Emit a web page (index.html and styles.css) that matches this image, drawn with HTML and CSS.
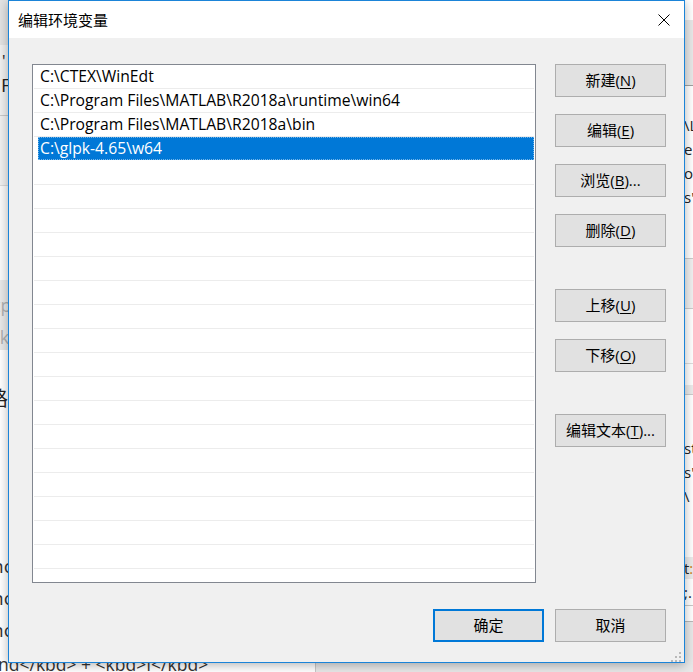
FILE: index.html
```html
<!DOCTYPE html>
<html lang="zh-CN">
<head>
<meta charset="utf-8">
<title>编辑环境变量</title>
<link rel="stylesheet" href="styles.css">
</head>
<body>
<div class="desk">
  <div class="pane-left">
    <div class="lb-top"></div>
    <div class="lb-head">
      <div class="lt-q">'</div>
      <div class="lt-f">F</div>
    </div>
    <div class="lb-mid"></div>
    <div class="lb-gap"></div>
    <div class="lb-box">
      <div class="lt-g">tp</div>
      <div class="lt-g">-k</div>
    </div>
    <div class="lb-white">
      <div class="lt-road">路</div>
      <div class="code">
        <div class="cl">nc</div>
        <div class="cl">nc</div>
        <div class="cl">nc</div>
        <div class="cl cl-last">nd&lt;/<span class="sp">kbd</span>&gt; + &lt;<span class="sp">kbd</span>&gt;I&lt;/<span class="sp">kbd</span>&gt;</div>
      </div>
    </div>
  </div>
  <div class="pane-right">
    <div class="r-top"></div>
    <div class="r-bar"></div>
    <div class="r-text">
      <div>\Lib</div>
      <div>e<span class="or">l</span>e</div>
      <div>op</div>
      <div>s't</div>
    </div>
    <div class="r-sep"></div>
    <div class="r-w1"></div>
    <div class="r-w2"></div>
    <div class="r-g1"></div>
    <div class="r-text2">
      <div>st</div>
      <div>s't</div>
      <div>\</div>
    </div>
    <div class="r-gband">t<span class="or">:</span></div>
    <div class="r-semi">;.</div>
    <div class="r-w3"></div>
    <div class="r-bottom"></div>
  </div>
</div>

<div class="dialog">
  <div class="titlebar">
    <span class="title">编辑环境变量</span>
    <svg class="close" width="12" height="12" viewBox="0 0 12 12" aria-hidden="true">
      <path d="M0.5 0.5 L11.5 11.5 M11.5 0.5 L0.5 11.5" stroke="#000" stroke-width="1" fill="none"/>
    </svg>
  </div>
  <div class="dbody">
    <div class="main">
      <div class="list">
        <div class="row"><span class="cell">C:\CTEX\WinEdt</span></div>
        <div class="row"><span class="cell">C:\Program Files\MATLAB\R2018a\runtime\win64</span></div>
        <div class="row"><span class="cell">C:\Program Files\MATLAB\R2018a\bin</span></div>
        <div class="row row-sel"><span class="cell">C:\glpk-4.65\w64</span></div>
        <div class="row"></div>
        <div class="row"></div>
        <div class="row"></div>
        <div class="row"></div>
        <div class="row"></div>
        <div class="row"></div>
        <div class="row"></div>
        <div class="row"></div>
        <div class="row"></div>
        <div class="row"></div>
        <div class="row"></div>
        <div class="row"></div>
        <div class="row"></div>
        <div class="row"></div>
        <div class="row"></div>
        <div class="row"></div>
        <div class="row"></div>
        <div class="row"></div>
      </div>
      <div class="side">
        <button class="btn">新建(<u>N</u>)</button>
        <button class="btn">编辑(<u>E</u>)</button>
        <button class="btn">浏览(<u>B</u>)...</button>
        <button class="btn">删除(<u>D</u>)</button>
        <button class="btn btn-group">上移(<u>U</u>)</button>
        <button class="btn">下移(<u>O</u>)</button>
        <button class="btn btn-group">编辑文本(<u>T</u>)...</button>
      </div>
    </div>
    <div class="footer">
      <button class="btn btn-default">确定</button>
      <button class="btn">取消</button>
    </div>
  </div>
  <svg class="grip" width="11" height="10" viewBox="0 0 11 10" aria-hidden="true">
    <rect x="8" y="0" width="2" height="2" fill="#b9b9b9"/>
    <rect x="4" y="4" width="2" height="2" fill="#b9b9b9"/>
    <rect x="8" y="4" width="2" height="2" fill="#b9b9b9"/>
    <rect x="0" y="8" width="2" height="2" fill="#b9b9b9"/>
    <rect x="4" y="8" width="2" height="2" fill="#b9b9b9"/>
    <rect x="8" y="8" width="2" height="2" fill="#b9b9b9"/>
  </svg>
</div>
</body>
</html>
```

FILE: styles.css
```css
* { box-sizing: border-box; }
html, body { margin: 0; padding: 0; }
body {
  width: 693px;
  height: 672px;
  overflow: hidden;
  position: relative;
  background: #fff;
  font-family: "Open Sans", "Noto Sans CJK SC", sans-serif;
  color: #000;
}

/* ---------- background window ---------- */
.desk { display: flex; width: 693px; height: 672px; }
.pane-left {
  width: 315px;
  flex: 0 0 315px;
  display: flex;
  flex-direction: column;
  background: #fff;
  overflow: hidden;
}
.pane-left > div { flex-shrink: 0; }
.lb-top { height: 45px; background: #e3e3e3; }
.lb-head {
  height: 71px;
  background: #f0f0f0;
  border-bottom: 1px solid #c9c9c9;
  color: #222;
}
.lt-q { font-size: 16px; line-height: 16px; padding: 8px 0 0 2px; height: 28px; }
.lt-f { font-size: 19px; line-height: 24px; padding-left: 1px; }
.lb-mid { height: 70px; background: #f0f0f0; border-bottom: 1px solid #dadada; }
.lb-gap { height: 94px; background: #fafafa; }
.lb-box {
  height: 70px;
  background: #e9e9e9;
  color: #b0b0b0;
  font-size: 18px;
  line-height: 32px;
  padding-top: 9px;
  margin-left: -6px;
}
.lb-white { flex: 1 0 auto; background: #fff; }
.lt-road {
  font-size: 20px;
  line-height: 24px;
  margin-top: 37px;
  margin-left: -12px;
  color: #222;
}
.code {
  margin-top: 139px;
  margin-left: -8px;
  font-size: 19px;
  line-height: 32px;
  color: #333;
  white-space: nowrap;
}
.cl { height: 32px; }
.cl-last { margin-left: 6px; margin-top: 2px; font-size: 17.5px; }
.sp { text-decoration: underline dotted #e05050; text-underline-offset: 3px; }

.pane-right {
  flex: 1 1 auto;
  min-width: 0;
  overflow: hidden;
  display: flex;
  flex-direction: column;
  border-left: 1px solid #c8c8c8;
  font-size: 15px;
  color: #222;
  white-space: nowrap;
}
.pane-right > div { padding-left: 368px; flex-shrink: 0; }
.r-top { height: 20px; background: #fff; }
.r-bar { height: 66px; background: #e8e8e8; border-bottom: 1px solid #a0a0a0; }
.r-text { height: 172px; padding-top: 27px; line-height: 24px; }
.or { color: #d08020; }
.r-sep { height: 50px; background: #f0f0f0; border-top: 1px solid #ccc; }
.r-w1 { height: 55px; border-top: 1px solid #ccc; }
.r-w2 { height: 22px; border-top: 1px solid #ddd; }
.r-g1 { height: 10px; background: #ebebeb; border-bottom: 1px solid #ccc; }
.r-text2 { height: 162px; padding-top: 41px; line-height: 24px; }
.r-gband { height: 22px; background: #ebebeb; line-height: 22px; }
.r-semi { height: 27px; line-height: 26px; border-bottom: 1px solid #c8c8c8; }
.r-w3 { height: 16px; border-bottom: 1px solid #b8b8b8; }
.pane-right > .r-bottom { flex: 1 0 auto; background: #e8e8e8; }

/* ---------- dialog ---------- */
.dialog {
  position: absolute;
  left: 8px;
  top: 0;
  width: 677px;
  height: 663px;
  border: 1px solid #1b84d8;
  background: #f0f0f0;
  box-shadow: 0 2px 10px rgba(0, 0, 0, 0.3);
  display: flex;
  flex-direction: column;
}
.titlebar {
  height: 37px;
  background: #fff;
  display: flex;
  align-items: center;
  justify-content: space-between;
  padding: 0 14px 0 9px;
}
.title { font-size: 15px; line-height: 20px; }
.close { display: block; }

.dbody {
  flex: 1;
  display: flex;
  flex-direction: column;
  padding: 26px 18px 20px 23px;
}
.main { display: flex; gap: 19px; }
.list {
  width: 504px;
  height: 519px;
  border: 1px solid #828790;
  background: #fff;
  padding: 0 1px;
  overflow: hidden;
}
.row {
  height: 24px;
  border-bottom: 1px solid #ececec;
  font-size: 15.7px;
  line-height: 23px;
  white-space: nowrap;
}
.cell { display: block; height: 23px; padding-left: 6px; }
.row-sel { border-bottom-color: #fff; }
.row-sel .cell {
  margin-left: 4px;
  padding-left: 2px;
  background: #0078d7;
  color: #fff;
  outline: 1px dotted rgba(255, 255, 255, 0.45);
  outline-offset: -1px;
}

.side {
  width: 111px;
  display: flex;
  flex-direction: column;
  gap: 17px;
}
.btn {
  width: 111px;
  height: 33px;
  margin: 0;
  padding: 0 0 2px;
  border: 1px solid #adadad;
  background: #e1e1e1;
  font-family: "Open Sans", "Noto Sans CJK SC", sans-serif;
  font-size: 15px;
  line-height: 20px;
  color: #000;
}
.btn u { text-underline-offset: 2px; }
.btn-group { margin-top: 25px; }
.footer {
  display: flex;
  justify-content: flex-end;
  gap: 11px;
  margin-top: 26px;
}
.btn-default { border: 2px solid #0078d7; }
.grip { position: absolute; right: 2px; bottom: 0; }
```
